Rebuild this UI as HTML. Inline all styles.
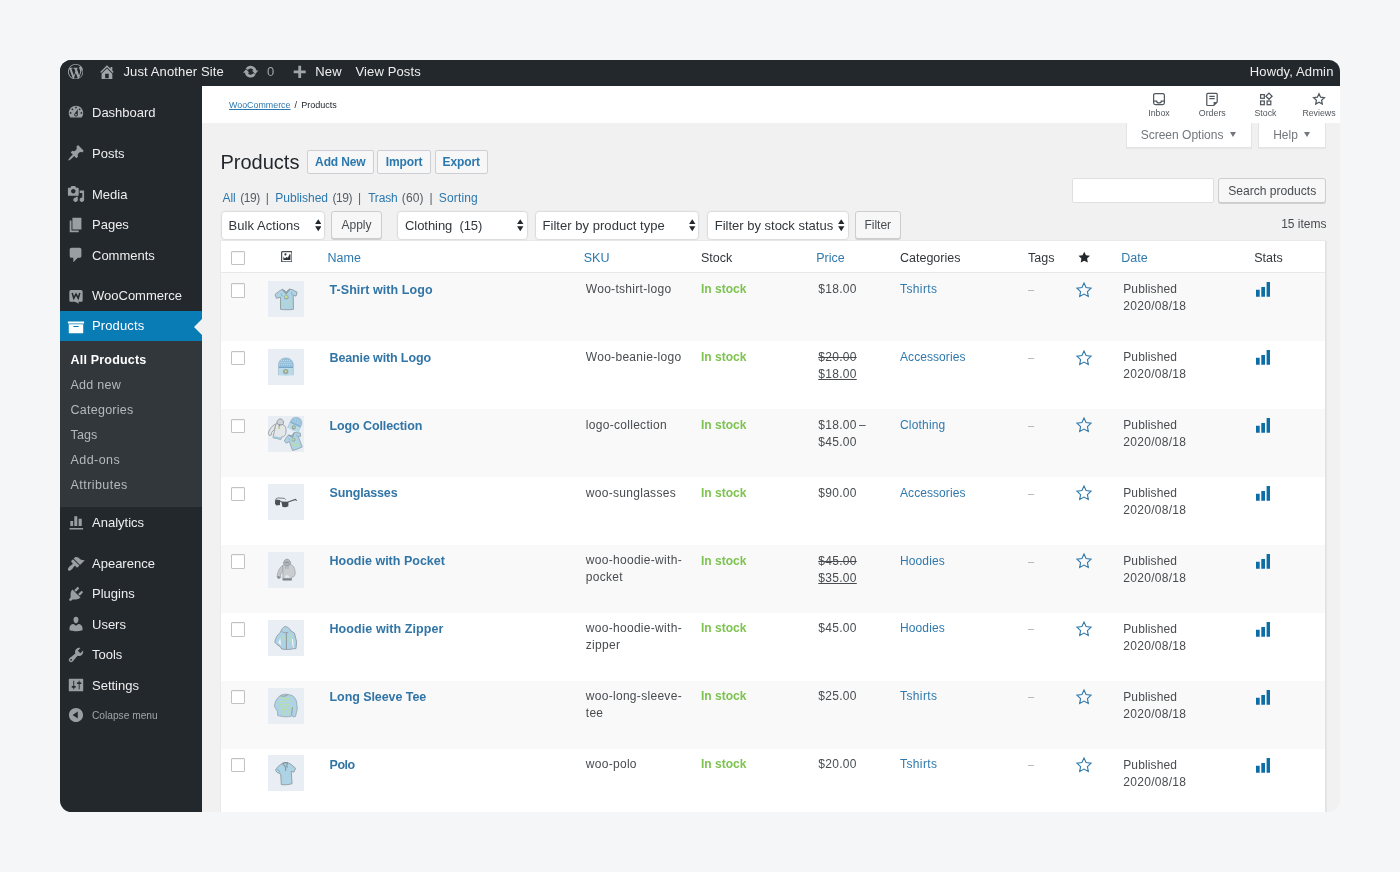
<!DOCTYPE html>
<html lang="en">
<head>
<meta charset="utf-8">
<title>Products ‹ Just Another Site — WordPress</title>
<style>
*{box-sizing:border-box;margin:0;padding:0}
html,body{width:1400px;height:872px;overflow:hidden}
body{background:#f5f6f8;font-family:"Liberation Sans",sans-serif;font-size:12.5px;color:#32373c;position:relative}
a{color:#2f79ad;text-decoration:none}
ul{list-style:none}
svg{display:block}
#frame{will-change:transform;position:absolute;left:60px;top:60px;width:1280px;height:752.400px;border-radius:11.500px;overflow:hidden;background:#f1f1f1}
#adminbar{position:absolute;left:0;top:0;width:1280px;height:26.400px;background:#23282d;color:#eee;z-index:5}
#adminbar .ab{position:absolute;height:26px;display:flex;align-items:center}
#adminbar .abt{position:absolute;top:0;height:26px;line-height:24px;font-size:13px;white-space:nowrap;letter-spacing:.13px}
.ab.wp{left:8px;top:-1.300px}.ab.home{left:38.300px;top:-1.400px}.abt.site{left:63.400px;letter-spacing:.2px}.ab.upd{left:183.400px;top:-1px}.abt.cnt{left:207px;color:#a0a5aa}
.ab.plus{left:230.200px}.abt.new{left:255.300px;letter-spacing:-.25px}.abt.vp{left:295.500px;letter-spacing:-.15px}.abt.howdy{right:6.500px}
#sidebar{position:absolute;left:0;top:0;width:142.400px;height:752px;background:#23282d}
#menu .mi{position:absolute;left:0;width:142px;height:30px;color:#eee;font-size:13px;line-height:30px;white-space:nowrap}
#menu .mi .ic{position:absolute;left:6.7px;top:6px;width:18px;height:18px;display:flex;align-items:center;justify-content:center;opacity:.95}
#menu .mi .lb{position:absolute;left:32px;top:.8px;letter-spacing:0}
#menu .mi.active{background:#0a7cb5;color:#fff}
#menu .mi.active .lb{top:-.4px;letter-spacing:.12px}
#menu .mi.active .ic{top:6.6px;opacity:1}
#menu .mi.collapse{font-size:10.2px;color:#a0a5aa}
#submenu{position:absolute;left:0;top:281px;width:142px;height:166px;background:#32373c}
#submenu li{position:absolute;left:10.5px;height:20px;line-height:20px;font-size:12.5px;color:#b4b9be;white-space:nowrap;letter-spacing:.2px}
#submenu li.cur{color:#fff;font-weight:700;letter-spacing:.25px}
#sidebar .arrow{position:absolute;right:0;top:258.8px;width:0;height:0;border:8px solid transparent;border-right-color:#f1f1f1}
#wooheader{position:absolute;left:142px;top:26px;width:1138px;height:36.800px;background:#fff}
.crumbs{position:absolute;left:27px;top:1.3px;height:37px;line-height:37px;font-size:9px;color:#23282d;white-space:nowrap;word-spacing:1.6px}
.crumbs a{text-decoration:underline;font-size:8.9px;color:#2b78ae}
.act{position:absolute;top:0;width:53px;height:37px;color:#50575d}
.act .ai{position:absolute;left:0;right:0;top:5.800px;display:flex;justify-content:center}
.act .al{position:absolute;left:-5px;right:-5px;top:21.8px;text-align:center;font-size:8.8px;line-height:10px;white-space:nowrap}
#content{position:absolute;left:142px;top:63px;width:1138px;height:689px}
#content>*{position:absolute}
/* coordinates inside #content are relative to frame via negative offsets: use helper */
#content{left:0;top:0;width:1280px;height:752px;pointer-events:none}
.tab{top:63px;height:24.6px;background:#fff;border:1px solid #e2e4e7;border-top:none;color:#72777c;font-size:12px;line-height:24px;white-space:nowrap;box-shadow:0 1px 1px rgba(0,0,0,.04)}
.tab span{position:absolute;top:0}
.tab i{position:absolute;top:9.2px;width:0;height:0;border:3.4px solid transparent;border-top:5.6px solid #72777c;border-bottom:none}
.tab.so{left:1066px;width:126px}.tab.so span{left:13.700px}.tab.so i{left:103px}
.tab.help{left:1198px;width:68px}.tab.help span{left:14.200px}.tab.help i{left:44.500px}
h1{left:160.5px;top:88px;font-size:20px;font-weight:400;line-height:28px;color:#23282d;letter-spacing:0}
.pta{top:90.3px;height:23.6px;border:1px solid #ccd0d4;border-radius:2px;background:#f7f7f7;font-size:12px;font-weight:700;line-height:23.600px;text-align:center;white-space:nowrap;letter-spacing:-.12px;color:#2b78ae}
.views{left:0;top:128.6px;height:18px;line-height:18px;font-size:12px;color:#555d66;white-space:nowrap}
.views li{position:absolute;top:0}
.views .n{margin-left:1.070px;letter-spacing:-.4px}
.views .sep{margin-left:2.470px}
.views a{color:#2b78ae}
.search{left:0;top:0}
.search .inp{position:absolute;left:1012.100px;top:117.900px;width:141.500px;height:25.100px;background:#fff;border:1px solid #dfdfdf;border-radius:2px}
.btn{position:absolute;height:24px;border:1px solid #cdcdcd;border-radius:3px;background:#f7f7f7;box-shadow:0 1px 0 #d0d0d0;color:#484c50;font-size:12px;line-height:22px;text-align:center;white-space:nowrap}
.sbtn{left:1157.900px;top:117.900px;width:108.600px;height:25.200px;line-height:25.800px;font-size:12.100px}
.filters{left:0;top:0}
.filters .btn{top:151.3px;height:28.2px;line-height:26.6px}
.sel{position:absolute;top:151.200px;height:28.700px;border:1px solid #ddd;border-radius:4px;box-shadow:0 0 0 .5px rgba(0,0,0,.03);background:#fff;color:#32373c;font-size:13px;line-height:28.200px;padding-left:6.600px;letter-spacing:.04px;white-space:nowrap}
.sel svg{position:absolute;right:2.700px;top:7.200px}
.count{right:13.500px;top:154.400px;font-size:12px;line-height:20px;color:#484c50;white-space:nowrap}
table.list{left:161px;top:181.400px;width:1104.300px;border-collapse:separate;border-spacing:0;table-layout:fixed;background:#fff;border:0;box-shadow:1.700px 0 0 0 #dfe3e6,0 0 0 1px rgba(0,0,0,.03)}
table.list th{height:31.600px;font-weight:400;text-align:left;font-size:12.500px;color:#32373c;border-bottom:1px solid #e9e9e9;vertical-align:top;padding:9.400px 0 0 0;line-height:15px;white-space:nowrap}
table.list td{height:68px;vertical-align:top;padding:calc(8.350px - var(--d)) 0 0 2px;font-size:12px;line-height:17px;color:#484c50;letter-spacing:.3px;white-space:nowrap}
table.list tr.alt td{background:#f9f9f9}
.c-cb{width:47px}.c-thumb{width:59.5px}.c-name{width:256.25px}.c-sku{width:117.25px}.c-stock{width:115.25px}.c-price{width:83.75px}.c-cat{width:128px}.c-tags{width:44px}.c-star{width:49.25px}.c-date{width:133px}.c-stats{width:71.050px}
table.list td.c-cb{padding:calc(10.200px - var(--d)) 0 0 10.200px}
table.list th.c-cb{padding:9.700px 0 0 10.200px}
table.list td.c-thumb{padding:calc(7.800px - var(--d)) 0 0 .1px}
table.list th.c-thumb{padding:9.500px 0 0 12.600px}
table.list td.c-stock,table.list td.c-cat,table.list td.c-tags{padding-left:0}
table.list td.c-star{padding:calc(7.600px - var(--e)) 0 0 3px}
table.list th.c-star{padding:9.700px 0 0 6.300px}
table.list td.c-stats{padding:calc(9.400px - var(--e)) 0 0 1.700px}
.cb{display:block;width:13.900px;height:14.400px;border:1px solid #c2c2c2;border-radius:1px;background:#fff;box-shadow:inset 0 1px 1px rgba(0,0,0,.05)}
.thumb{display:block;width:36.200px;height:36px;background:#e9eef5;overflow:hidden}
.thumb svg{width:36.200px;height:36px}
.rt{font-weight:700;font-size:12.500px;letter-spacing:0;color:#3175a6}
.instock{background:none;color:#7dc350;font-weight:700;letter-spacing:0}
del{text-decoration:line-through}
ins{text-decoration:underline}

table.list td.c-tags{color:#a3a6a9;font-size:11px}
table.list td.c-price{word-spacing:-1.300px}
table.list td.c-date{letter-spacing:.12px}
table.list td.c-date .d{letter-spacing:.3px}
table.list td.c-name{padding-top:calc(9px - var(--d))}
table.list td.c-sku{padding-top:calc(8.250px - var(--d))}
table.list td.c-stock{padding-top:calc(8.450px - var(--d))}
table.list td.c-tags{padding-top:calc(8.400px - var(--d))}
table.list td.c-date{padding-top:calc(8.100px - var(--e))}

</style>
</head>
<body>
<div id="frame">
<div id="adminbar">
<span class="ab wp"><svg width="15.4" height="15.4" viewBox="0 0 20 20" aria-hidden="true"><path fill="#a0a5aa" d="M20 10c0-5.51-4.49-10-10-10C4.48 0 0 4.49 0 10c0 5.52 4.48 10 10 10 5.51 0 10-4.48 10-10zM7.78 15.37L4.37 6.22c.55-.02 1.17-.08 1.17-.08.5-.06.44-1.13-.06-1.11 0 0-1.45.11-2.37.11-.18 0-.37 0-.58-.01C4.12 2.69 6.87 1.11 10 1.11c2.33 0 4.45.87 6.05 2.34-.68-.11-1.65.39-1.65 1.58 0 .74.45 1.36.9 2.1.35.61.55 1.36.55 2.46 0 1.49-1.4 5-1.4 5l-3.03-8.37c.54-.02.82-.17.82-.17.5-.05.44-1.25-.06-1.22 0 0-1.44.12-2.38.12-.87 0-2.33-.12-2.33-.12-.5-.03-.56 1.2-.06 1.22l.92.08 1.26 3.41zM17.41 10c.24-.64.74-1.87.43-4.25.7 1.29 1.05 2.71 1.05 4.25 0 3.29-1.73 6.24-4.4 7.78.97-2.59 1.94-5.2 2.92-7.78zM6.1 18.09C3.12 16.65 1.11 13.53 1.11 10c0-1.3.23-2.48.72-3.59C3.25 10.3 4.67 14.2 6.1 18.09zm4.03-6.63l2.58 6.98c-.86.29-1.76.45-2.71.45-.79 0-1.57-.11-2.29-.33.81-2.38 1.62-4.74 2.42-7.1z"/></svg></span>
<span class="ab home"><svg width="17.9" height="17.9" viewBox="0 0 20 20" aria-hidden="true"><path fill="#a0a5aa" d="M16 8.5l1.53 1.53-1.06 1.06L10 4.62l-6.47 6.47-1.06-1.06L10 2.5l4 4v-2h2v4zm-6-2.46l6 5.99V18H4v-5.970zM12 17v-5H8v5h4z"/></svg></span>
<span class="abt site">Just Another Site</span>
<span class="ab upd"><svg width="15.3" height="15.3" viewBox="0 0 16 16" aria-hidden="true"><g fill="none" stroke="#a0a5aa" stroke-width="2.900"><path d="M4.01 5.51A4.7 4.7 0 0 1 12.65 7.35"/><path d="M11.99 10.49A4.7 4.7 0 0 1 3.35 8.65"/></g><path fill="#a0a5aa" d="M9.40 6.900h6.600l-3.300 3.700zM0.00 9.100h6.600l-3.300-3.700z"/></svg></span>
<span class="abt cnt">0</span>
<span class="ab plus"><svg width="18.5" height="18.5" viewBox="0 0 20 20" aria-hidden="true"><path fill="#a0a5aa" d="M17 7v3h-5v5H9v-5H4V7h5V2h3v5h5z"/></svg></span>
<span class="abt new">New</span>
<span class="abt vp">View Posts</span>
<span class="abt howdy">Howdy, Admin</span>
</div>
<nav id="sidebar">
<ul id="menu">
<li class="mi " style="top:37px"><span class="ic"><svg width="18" height="18" viewBox="0 0 20 20" aria-hidden="true"><path fill="#a0a5aa" d="M3.76 16h12.48c1.1-1.37 1.76-3.11 1.76-5 0-4.42-3.58-8-8-8s-8 3.58-8 8c0 1.89.66 3.63 1.76 5zM10 4c.55 0 1 .45 1 1s-.45 1-1 1-1-.45-1-1 .45-1 1-1zM6 6c.55 0 1 .45 1 1s-.45 1-1 1-1-.45-1-1 .45-1 1-1zm8 0c.55 0 1 .45 1 1s-.45 1-1 1-1-.45-1-1 .45-1 1-1zm-5.37 5.55L12 7v6c0 1.1-.9 2-2 2s-2-.9-2-2c0-.57.24-1.08.63-1.45zM4 10c.55 0 1 .45 1 1s-.45 1-1 1-1-.45-1-1 .45-1 1-1zm12 0c.55 0 1 .45 1 1s-.45 1-1 1-1-.45-1-1 .45-1 1-1zm-5 3c0-.55-.45-1-1-1s-1 .45-1 1 .45 1 1 1 1-.45 1-1z"/></svg></span><span class="lb">Dashboard</span></li>
<li class="mi " style="top:78px"><span class="ic"><svg width="18" height="18" viewBox="0 0 20 20" aria-hidden="true"><path fill="#a0a5aa" d="M10.44 3.02l1.82-1.82 6.36 6.35-1.83 1.82c-1.05-.68-2.48-.57-3.41.36l-.75.75c-.92.93-1.04 2.35-.35 3.41l-1.83 1.82-2.41-2.41-2.8 2.79c-.42.42-3.38 2.71-3.8 2.29s1.86-3.39 2.28-3.81l2.79-2.79L4.1 9.36l1.83-1.82c1.05.69 2.48.57 3.4-.36l.75-.75c.93-.92 1.05-2.35.36-3.41z"/></svg></span><span class="lb">Posts</span></li>
<li class="mi " style="top:119px"><span class="ic"><svg width="18" height="18" viewBox="0 0 20 20" aria-hidden="true"><path fill="#a0a5aa" d="M13 11V4c0-.55-.45-1-1-1h-1.67L9 1H5L3.67 3H2c-.55 0-1 .45-1 1v7c0 .55.45 1 1 1h10c.55 0 1-.45 1-1zM7 4.5c1.38 0 2.5 1.12 2.5 2.5S8.38 9.5 7 9.5 4.5 8.38 4.5 7 5.62 4.5 7 4.5zM14 6h5v10.5c0 1.38-1.12 2.5-2.5 2.5S14 17.88 14 16.5s1.12-2.5 2.5-2.5c.17 0 .34.02.5.05V9h-3V6zm-4 8.05V13h2v3.5c0 1.38-1.12 2.5-2.5 2.5S7 17.88 7 16.5 8.12 14 9.5 14c.17 0 .34.02.5.05z"/></svg></span><span class="lb">Media</span></li>
<li class="mi " style="top:149.5px"><span class="ic"><svg width="18" height="18" viewBox="0 0 20 20" aria-hidden="true"><path fill="#a0a5aa" d="M6 15V2h10v13H6zm-1 1h8v2H3V5h2v11z"/></svg></span><span class="lb">Pages</span></li>
<li class="mi " style="top:180px"><span class="ic"><svg width="18" height="18" viewBox="0 0 20 20" aria-hidden="true"><path fill="#a0a5aa" d="M5 2h9c1.1 0 2 .9 2 2v7c0 1.1-.9 2-2 2h-2l-5 5v-5H5c-1.1 0-2-.9-2-2V4c0-1.1.9-2 2-2z"/></svg></span><span class="lb">Comments</span></li>
<li class="mi " style="top:220.5px"><span class="ic"><svg width="18" height="18" viewBox="0 0 20 20" aria-hidden="true"><path fill="#a0a5aa" d="M4.4 3.4h11.2c1 0 1.8.8 1.8 1.800v9.400c0 1-.8 1.800-1.800 1.800H12.600l.900 2.200-4.800-2.200H4.400c-1 0-1.800-.8-1.800-1.800V5.200c0-1 .8-1.800 1.800-1.800z"/><polyline fill="none" stroke="#23282d" stroke-width="1.700" stroke-linejoin="miter" points="5.800,6.600 7.500,12.400 10,7.800 12.500,12.400 14.200,6.600"/></svg></span><span class="lb">WooCommerce</span></li>
<li class="mi active" style="top:251px"><span class="ic"><svg width="18" height="18" viewBox="0 0 20 20" aria-hidden="true"><path fill="#fff" d="M19 4v2H1V4h18zM2 7h16v10H2V7zm11 3V9H7v1h6z"/></svg></span><span class="lb">Products</span></li>
<li class="mi " style="top:447.5px"><span class="ic"><svg width="18" height="18" viewBox="0 0 20 20" aria-hidden="true"><path fill="#a0a5aa" d="M3.700 7.800h3.100v5.500H3.700zM8.100 2.600h3.300v10.700H8.100zM12.900 5.200h3.500v8.100h-3.500zM2.800 15.600h15.100v1.600H2.800z"/></svg></span><span class="lb">Analytics</span></li>
<li class="mi " style="top:488.5px"><span class="ic"><svg width="18" height="18" viewBox="0 0 20 20" aria-hidden="true"><path fill="#a0a5aa" d="M14.48 11.06L7.41 3.99l1.5-1.5c.5-.56 2.3-.47 3.51.32 1.21.8 1.43 1.28 2.91 2.1 1.18.64 2.45 1.26 4.45.85zm-.71.71L6.7 4.7 4.93 6.47c-.39.39-.39 1.02 0 1.41l1.06 1.06c.39.39.39 1.03 0 1.42-.6.6-1.43 1.11-2.21 1.69-.35.26-.7.53-1.01.84C1.43 14.23.4 16.08 1.4 17.07c.99 1 2.84-.03 4.18-1.36.31-.31.58-.66.85-1.02.57-.78 1.08-1.61 1.69-2.21.39-.39 1.02-.39 1.41 0l1.06 1.06c.39.39 1.02.39 1.41 0z"/></svg></span><span class="lb">Apearence</span></li>
<li class="mi " style="top:518.5px"><span class="ic"><svg width="18" height="18" viewBox="0 0 20 20" aria-hidden="true"><path fill="#a0a5aa" d="M13.11 4.36L9.87 7.6 8 5.73l3.24-3.24c.35-.34 1.05-.2 1.56.32.52.51.66 1.21.31 1.55zm-8 1.77l.91-1.12 9.01 9.01-1.19.84c-.71.71-2.63 1.16-3.82 1.16H6.140L4.9 17.26c-.59.59-1.54.59-2.12 0-.59-.58-.59-1.53 0-2.120L4 13.900V10.200c0-1.190.410-3.360 1.110-4.070zm7.260 3.970l3.240-3.240c.340-.350 1.040-.210 1.550.310.520.510.660 1.210.310 1.550l-3.240 3.250z"/></svg></span><span class="lb">Plugins</span></li>
<li class="mi " style="top:549px"><span class="ic"><svg width="18" height="18" viewBox="0 0 20 20" aria-hidden="true"><path fill="#a0a5aa" d="M10 9.25c-2.27 0-2.73-3.44-2.73-3.44C7 4.020 7.820 2 9.970 2c2.160 0 2.980 2.020 2.710 3.810 0 0-.410 3.440-2.680 3.440zm0 2.570L12.720 10c2.390 0 4.520 2.330 4.520 4.530v2.490s-3.650 1.130-7.240 1.130c-3.650 0-7.240-1.130-7.240-1.130v-2.490c0-2.250 1.940-4.480 4.470-4.480z"/></svg></span><span class="lb">Users</span></li>
<li class="mi " style="top:579.5px"><span class="ic"><svg width="18" height="18" viewBox="0 0 20 20" aria-hidden="true"><path fill="#a0a5aa" d="M16.68 9.77c-1.34 1.34-3.3 1.67-4.95.99l-5.410 6.520c-.990.990-2.590.990-3.580 0s-.990-2.590 0-3.570l6.520-5.420c-.680-1.650-.350-3.610.990-4.950 1.280-1.280 3.120-1.620 4.720-1.060l-2.890 2.890 2.820 2.820 2.860-2.870c.530 1.580.180 3.390-1.080 4.650zM3.810 16.210c.400.390 1.040.390 1.430 0 .400-.400.400-1.040 0-1.430-.390-.400-1.030-.400-1.430 0-.390.390-.390 1.030 0 1.430z"/></svg></span><span class="lb">Tools</span></li>
<li class="mi " style="top:610px"><span class="ic"><svg width="18" height="18" viewBox="0 0 20 20" aria-hidden="true"><path fill="#a0a5aa" d="M18 16V4c0-.55-.45-1-1-1H3c-.55 0-1 .45-1 1v12c0 .55.45 1 1 1h14c.55 0 1-.45 1-1zM8 11h1c.55 0 1 .45 1 1s-.45 1-1 1H8v1.500c0 .280-.220.500-.500.500s-.500-.220-.500-.500V13H6c-.550 0-1-.450-1-1s.450-1 1-1h1V5.500c0-.280.220-.500.500-.500s.500.220.500.500V11zm5-2h-1c-.550 0-1-.450-1-1s.450-1 1-1h1V5.500c0-.280.220-.500.500-.500s.500.220.500.500V7h1c.550 0 1 .450 1 1s-.450 1-1 1h-1v5.500c0 .280-.220.500-.500.500s-.500-.220-.500-.500V9z"/></svg></span><span class="lb">Settings</span></li>
<li class="mi collapse" style="top:640px"><span class="ic"><svg width="18" height="18" viewBox="0 0 20 20" aria-hidden="true"><path fill="#a0a5aa" d="M10 2.16c4.33 0 7.84 3.51 7.84 7.84s-3.51 7.84-7.84 7.84S2.16 14.33 2.16 10 5.67 2.16 10 2.16zm2 11.720V6.120L6.180 9.970z"/></svg></span><span class="lb">Colapse menu</span></li>
</ul>
<ul id="submenu"><li class="cur" style="top:9px;letter-spacing:0.2px">All Products</li><li class="" style="top:34px;letter-spacing:0.26px">Add new</li><li class="" style="top:59px;letter-spacing:0.26px">Categories</li><li class="" style="top:84px;letter-spacing:0.15px">Tags</li><li class="" style="top:109px;letter-spacing:0.45px">Add-ons</li><li class="" style="top:134px;letter-spacing:0.45px">Attributes</li></ul>
<span class="arrow"></span>
</nav>
<header id="wooheader">
<div class="crumbs"><a>WooCommerce</a> / Products</div>
<div class="act" style="left:930.5px"><span class="ai"><svg width="14" height="14" viewBox="0 0 14 14" aria-hidden="true"><g fill="none" stroke="#50575d" stroke-width="1.25"><rect x="1.600" y="1.500" width="10.800" height="11" rx="1.800"/><path d="M1.600 9.200H4.700c0 1 1 1.700 2.300 1.700s2.300-.700 2.300-1.700h3.100"/></g></svg></span><span class="al">Inbox</span></div>
<div class="act" style="left:983.8px"><span class="ai"><svg width="14" height="14" viewBox="0 0 14 14" aria-hidden="true"><g fill="none" stroke="#50575d" stroke-width="1.25"><path d="M2.700 1.400h8.600a.9.9 0 0 1 .9.900v7.600l-3.600 3.700H2.700a.9.9 0 0 1-.9-.9V2.300a.9.9 0 0 1 .9-.9z"/><path d="M4.300 4.300h5.400M4.300 6.500h5.400"/><path fill="#50575d" stroke="none" d="M12.200 9.900H9.300a.7.7 0 0 0-.7.700v3z"/></g></svg></span><span class="al">Orders</span></div>
<div class="act" style="left:1037px"><span class="ai"><svg width="14" height="14" viewBox="0 0 14 14" aria-hidden="true"><g fill="none" stroke="#50575d" stroke-width="1.25"><rect x="1.600" y="2.600" width="3.700" height="3.700"/><rect x="1.600" y="9" width="3.700" height="3.700"/><rect x="8.100" y="9" width="3.700" height="3.700"/><path d="M10 1.100l3.100 3.100-3.100 3.100-3.100-3.100z"/></g></svg></span><span class="al">Stock</span></div>
<div class="act" style="left:1090.5px"><span class="ai"><svg width="14" height="14" viewBox="0 0 14 14" aria-hidden="true"><g fill="none" stroke="#50575d" stroke-width="1.25"><path d="M7 1.700l1.600 3.500 3.800.5-2.800 2.600.7 3.800L7 10.200l-3.300 1.900.7-3.800-2.800-2.600 3.800-.5z" stroke-linejoin="miter"/></g></svg></span><span class="al">Reviews</span></div>
</header>
<main id="content">
<div class="tab so"><span>Screen Options</span><i></i></div>
<div class="tab help"><span>Help</span><i></i></div>
<h1>Products</h1>
<a class="pta" style="left:247.1px;width:66.5px">Add New</a>
<a class="pta" style="left:317.4px;width:53.4px">Import</a>
<a class="pta" style="left:374.6px;width:53.2px">Export</a>
<ul class="views"><li style="left:162.4px"><a>All</a> <span class="n">(19)</span> <span class="sep">|</span></li><li style="left:215.3px"><a>Published</a> <span class="n">(19)</span> <span class="sep">|</span></li><li style="left:308.2px"><a style="letter-spacing:-.2px">Trash</a> <span class="n" style="letter-spacing:.1px">(60)</span> <span class="sep">|</span></li><li style="left:378.8px"><a style="letter-spacing:.15px">Sorting</a></li></ul>
<div class="search"><span class="inp"></span><span class="btn sbtn">Search products</span></div>
<div class="filters">
<span class="sel" style="left:161px;width:104px">Bulk Actions<svg width="6.5" height="12.4" viewBox="0 0 6.5 12.4" aria-hidden="true"><path d="M3.250 .200L6.400 5.100H.100zM3.250 12.200L.100 7.300h6.300z" fill="#23282d"/></svg></span>
<span class="btn" style="left:271.2px;width:50.6px">Apply</span>
<span class="sel" style="left:337.4px;width:130.2px;letter-spacing:-.05px">Clothing&nbsp; (15)<svg width="6.5" height="12.4" viewBox="0 0 6.5 12.4" aria-hidden="true"><path d="M3.250 .200L6.400 5.100H.100zM3.250 12.200L.100 7.300h6.300z" fill="#23282d"/></svg></span>
<span class="sel" style="left:474.9px;width:164.5px">Filter by product type<svg width="6.5" height="12.4" viewBox="0 0 6.5 12.4" aria-hidden="true"><path d="M3.250 .200L6.400 5.100H.100zM3.250 12.200L.100 7.300h6.300z" fill="#23282d"/></svg></span>
<span class="sel" style="left:647.1px;width:141.5px;letter-spacing:0">Filter by stock status<svg width="6.5" height="12.4" viewBox="0 0 6.5 12.4" aria-hidden="true"><path d="M3.250 .200L6.400 5.100H.100zM3.250 12.200L.100 7.300h6.300z" fill="#23282d"/></svg></span>
<span class="btn" style="left:794.9px;width:45.8px">Filter</span>
</div>
<div class="count">15 items</div>
<table class="list">
<thead><tr>
<th class="c-cb"><span class="cb"></span></th>
<th class="c-thumb"><svg width="11.6" height="11.6" viewBox="0 0 12 12" aria-hidden="true"><rect x=".600" y=".600" width="10.800" height="10.800" rx="1.300" fill="none" stroke="#4a4f54" stroke-width="1.350"/><path fill="#2c3136" d="M2.500 9.300V5.600l1.500 2.200 1.700-1.700 1.400 1L9 3.200l.8.300v5.800z"/><circle cx="4.600" cy="3.500" r="1.100" fill="#2c3136"/></svg></th>
<th class="c-name"><a>Name</a></th>
<th class="c-sku"><a>SKU</a></th>
<th class="c-stock">Stock</th>
<th class="c-price"><a>Price</a></th>
<th class="c-cat">Categories</th>
<th class="c-tags">Tags</th>
<th class="c-star"><svg width="12.5" height="12.5" viewBox="0 0 20 20" aria-hidden="true"><path d="M10 1l2.800 5.900 6.400.8-4.700 4.400 1.200 6.400L10 15.400l-5.700 3.100 1.200-6.400L.8 7.700l6.400-.8z" fill="#23282d"/></svg></th>
<th class="c-date"><a>Date</a></th>
<th class="c-stats">Stats</th>
</tr></thead>
<tbody>
<tr class="alt" style="--d:0.00px;--e:0.00px">
<td class="c-cb"><span class="cb"></span></td>
<td class="c-thumb"><span class="thumb"><svg width="36" height="36" viewBox="0 0 36 36" aria-hidden="true"><rect width="36" height="36" fill="#e9eef5"/><path d="M14.300 8.400l3.800 2.400 3.500-2.700 3 .700 4.500 2.500-1.200 3.800-2.700-.900.100 14.100c-4.200.600-8.600.600-12.900 0V16.200l-4 1.100-1.500-3.700c2.300-2.300 4.800-4 7.400-5.200z" fill="#aed3e4" stroke="#8f9aa2" stroke-width=".9" stroke-linejoin="round"/><path d="M14.300 8.400l3.800 4.500 3.500-4.800" fill="none" stroke="#8a949c" stroke-width="1.100"/><circle cx="18.300" cy="16.200" r="2.300" fill="#9aa4ab"/><circle cx="18.200" cy="15.900" r="1.400" fill="#bfe87a"/><path d="M14.500 20.500h9M14.500 22.800h9M14.500 25.100h9" stroke="#bfe87a" stroke-width="1" stroke-dasharray="1 1.300" fill="none"/><path d="M13 12.500l1.300 3M23.500 11l.5 3.500" stroke="#7fb0d6" stroke-width=".9" fill="none"/></svg></span></td>
<td class="c-name"><a class="rt" style="letter-spacing:0.06px">T-Shirt with Logo</a></td>
<td class="c-sku">Woo-tshirt-logo</td>
<td class="c-stock"><mark class="instock">In stock</mark></td>
<td class="c-price">$18.00</td>
<td class="c-cat"><a style="letter-spacing:0.39px">Tshirts</a></td>
<td class="c-tags">–</td>
<td class="c-star"><svg width="18" height="18" viewBox="0 0 20 20" aria-hidden="true"><path d="M10 2.300l2.300 5 5.500.700-4 3.800 1 5.400L10 14.500l-4.800 2.700 1-5.400-4-3.800 5.500-.700z" fill="none" stroke="#3079ad" stroke-width="1.250" stroke-linejoin="miter"/></svg></td>
<td class="c-date">Published<br><span class="d">2020/08/18</span></td>
<td class="c-stats"><svg width="14.3" height="14.8" viewBox="0 0 14.3 14.8" aria-hidden="true"><path fill="#0d6ea6" d="M0 7.700h3.700v7.100H0zM5.300 5h3.700v9.800H5.300zM10.600 0h3.700v14.800h-3.700z"/></svg></td>
</tr>
<tr class="reg" style="--d:0.20px;--e:0.06px">
<td class="c-cb"><span class="cb"></span></td>
<td class="c-thumb"><span class="thumb"><svg width="36" height="36" viewBox="0 0 36 36" aria-hidden="true"><rect width="36" height="36" fill="#e9eef5"/><path d="M10.400 26.300V15.800c0-4 3.200-6.900 7.400-6.900s7.400 2.900 7.400 6.900v10.500c-4.900.500-9.900.500-14.800 0z" fill="#b9dbe8"/><path d="M10.400 18.300v-2.500c0-4 3.200-6.900 7.400-6.900s7.400 2.900 7.400 6.900v2.500z" fill="#93bedb"/><path d="M11.500 13.500l12.500 0M11 15.700h13.600M12.800 11.400h10" stroke="#d4e6f0" stroke-width=".9" stroke-dasharray="1 1" fill="none"/><path d="M10.700 18.500h14.200" stroke="#6f9fc6" stroke-width=".9"/><path d="M10.400 26.300V15.800c0-4 3.200-6.900 7.400-6.900s7.400 2.900 7.400 6.900v10.500" fill="none" stroke="#a3b4c0" stroke-width=".6"/><circle cx="17.600" cy="22.600" r="2.700" fill="#9ba3a9"/><rect x="16.600" y="21.400" width="2" height="2" fill="#bfe87a"/></svg></span></td>
<td class="c-name"><a class="rt" style="letter-spacing:-0.13px">Beanie with Logo</a></td>
<td class="c-sku">Woo-beanie-logo</td>
<td class="c-stock"><mark class="instock">In stock</mark></td>
<td class="c-price"><del>$20.00</del><br><ins>$18.00</ins></td>
<td class="c-cat"><a style="letter-spacing:0.07px">Accessories</a></td>
<td class="c-tags">–</td>
<td class="c-star"><svg width="18" height="18" viewBox="0 0 20 20" aria-hidden="true"><path d="M10 2.300l2.300 5 5.500.700-4 3.800 1 5.400L10 14.500l-4.800 2.700 1-5.400-4-3.800 5.500-.700z" fill="none" stroke="#3079ad" stroke-width="1.250" stroke-linejoin="miter"/></svg></td>
<td class="c-date">Published<br><span class="d">2020/08/18</span></td>
<td class="c-stats"><svg width="14.3" height="14.8" viewBox="0 0 14.3 14.8" aria-hidden="true"><path fill="#0d6ea6" d="M0 7.700h3.700v7.100H0zM5.300 5h3.700v9.800H5.300zM10.600 0h3.700v14.800h-3.700z"/></svg></td>
</tr>
<tr class="alt" style="--d:0.40px;--e:0.12px">
<td class="c-cb"><span class="cb"></span></td>
<td class="c-thumb"><span class="thumb"><svg width="36" height="36" viewBox="0 0 36 36" aria-hidden="true"><rect width="36" height="36" fill="#e9eef5"/><g transform="translate(9.900 12.600) rotate(12) scale(.95) translate(-18 -17.700)"><path d="M14.900 13.300l-1.600 1.200c-2.600 2.600-4 6-4.300 10l1.600 2.200 2.300-1.200-.600-2.600 2.400-3.700z" fill="#e2e5e8" stroke="#9aa0a5" stroke-width=".9" stroke-linejoin="round"/><path d="M14.800 13.300l3.900-1.200 4.500.600 2.300 1.800c1.200 2.300 1.700 4.800 1.600 7.600l-1.500 2.700-2.200.700v2.700h-8.600z" fill="#e4e7ea" stroke="#9aa0a5" stroke-width=".9" stroke-linejoin="round"/><path d="M15.400 11.200c.3-2.500 1.700-4 3.500-4s3.300 1.500 3.600 4l-.9 1.700c-1.800.600-3.600.600-5.300 0z" fill="#cfd4d8" stroke="#8e9499" stroke-width=".9" stroke-linejoin="round"/><path d="M18.800 13v4.500" stroke="#8a9096" stroke-width="1.600"/><rect x="18" y="15" width="1.700" height="2.600" fill="#bfe87a"/><path d="M14.700 27.300h8.800" stroke="#9cc7dc" stroke-width="1.800"/></g><g transform="translate(27.500 8) rotate(25) scale(.78) translate(-17.800 -17.600)"><path d="M10.400 26.300V15.800c0-4 3.200-6.900 7.400-6.900s7.400 2.900 7.400 6.900v10.500c-4.900.500-9.900.500-14.800 0z" fill="#b9dbe8"/><path d="M10.400 18.300v-2.500c0-4 3.200-6.900 7.400-6.900s7.400 2.900 7.400 6.900v2.500z" fill="#93bedb"/><path d="M11.500 13.500l12.500 0M11 15.700h13.600M12.800 11.400h10" stroke="#d4e6f0" stroke-width=".9" stroke-dasharray="1 1" fill="none"/><path d="M10.700 18.500h14.200" stroke="#6f9fc6" stroke-width=".9"/><path d="M10.400 26.300V15.800c0-4 3.200-6.900 7.400-6.900s7.400 2.900 7.400 6.900v10.500" fill="none" stroke="#a3b4c0" stroke-width=".6"/><circle cx="17.600" cy="22.600" r="2.700" fill="#9ba3a9"/><rect x="16.600" y="21.400" width="2" height="2" fill="#bfe87a"/></g><g transform="translate(25.800 25.200) rotate(-20) scale(.800) translate(-18 -18)"><path d="M14.300 8.400l3.800 2.400 3.500-2.700 3 .700 4.500 2.500-1.200 3.800-2.700-.900.100 14.100c-4.200.600-8.600.600-12.900 0V16.200l-4 1.100-1.500-3.700c2.300-2.300 4.800-4 7.400-5.200z" fill="#aed3e4" stroke="#8f9aa2" stroke-width=".9" stroke-linejoin="round"/><path d="M14.300 8.400l3.800 4.500 3.500-4.800" fill="none" stroke="#8a949c" stroke-width="1.100"/><circle cx="18.300" cy="16.200" r="2.300" fill="#9aa4ab"/><circle cx="18.200" cy="15.900" r="1.400" fill="#bfe87a"/><path d="M14.500 20.500h9M14.500 22.800h9M14.500 25.100h9" stroke="#bfe87a" stroke-width="1" stroke-dasharray="1 1.300" fill="none"/><path d="M13 12.500l1.300 3M23.500 11l.5 3.500" stroke="#7fb0d6" stroke-width=".9" fill="none"/></g></svg></span></td>
<td class="c-name"><a class="rt" style="letter-spacing:-0.11px">Logo Collection</a></td>
<td class="c-sku">logo-collection</td>
<td class="c-stock"><mark class="instock">In stock</mark></td>
<td class="c-price">$18.00 –<br>$45.00</td>
<td class="c-cat"><a style="letter-spacing:0.18px">Clothing</a></td>
<td class="c-tags">–</td>
<td class="c-star"><svg width="18" height="18" viewBox="0 0 20 20" aria-hidden="true"><path d="M10 2.300l2.300 5 5.500.700-4 3.800 1 5.400L10 14.500l-4.800 2.700 1-5.400-4-3.800 5.500-.700z" fill="none" stroke="#3079ad" stroke-width="1.250" stroke-linejoin="miter"/></svg></td>
<td class="c-date">Published<br><span class="d">2020/08/18</span></td>
<td class="c-stats"><svg width="14.3" height="14.8" viewBox="0 0 14.3 14.8" aria-hidden="true"><path fill="#0d6ea6" d="M0 7.700h3.700v7.100H0zM5.300 5h3.700v9.800H5.300zM10.600 0h3.700v14.800h-3.700z"/></svg></td>
</tr>
<tr class="reg" style="--d:0.60px;--e:0.18px">
<td class="c-cb"><span class="cb"></span></td>
<td class="c-thumb"><span class="thumb"><svg width="36" height="36" viewBox="0 0 36 36" aria-hidden="true"><rect width="36" height="36" fill="#e9eef5"/><g transform="translate(0 .5)"><path d="M7.100 15l4.900.500-.100 4.900-3.700.500-1.300-1.800z" fill="#4b5056"/><path d="M13.200 17.100l7.100.100v4.600l-2.500 1-3.400-.200z" fill="#4b5056"/><path d="M11.800 16.400l1.700 1" stroke="#4b5056" stroke-width="1.100" fill="none"/><path d="M7.600 14.600l2.200-1.200 6.600.500 1.300 1.300" stroke="#6a7076" stroke-width=".9" fill="none"/><path d="M20 17.500l7.300-2.600 1 .900" stroke="#555a60" stroke-width="1.100" fill="none" stroke-linecap="round"/></g></svg></span></td>
<td class="c-name"><a class="rt" style="letter-spacing:-0.15px">Sunglasses</a></td>
<td class="c-sku">woo-sunglasses</td>
<td class="c-stock"><mark class="instock">In stock</mark></td>
<td class="c-price">$90.00</td>
<td class="c-cat"><a style="letter-spacing:0.07px">Accessories</a></td>
<td class="c-tags">–</td>
<td class="c-star"><svg width="18" height="18" viewBox="0 0 20 20" aria-hidden="true"><path d="M10 2.300l2.300 5 5.500.700-4 3.800 1 5.400L10 14.500l-4.800 2.700 1-5.400-4-3.800 5.500-.700z" fill="none" stroke="#3079ad" stroke-width="1.250" stroke-linejoin="miter"/></svg></td>
<td class="c-date">Published<br><span class="d">2020/08/18</span></td>
<td class="c-stats"><svg width="14.3" height="14.8" viewBox="0 0 14.3 14.8" aria-hidden="true"><path fill="#0d6ea6" d="M0 7.700h3.700v7.100H0zM5.300 5h3.700v9.800H5.300zM10.600 0h3.700v14.800h-3.700z"/></svg></td>
</tr>
<tr class="alt" style="--d:0.80px;--e:0.24px">
<td class="c-cb"><span class="cb"></span></td>
<td class="c-thumb"><span class="thumb"><svg width="36" height="36" viewBox="0 0 36 36" aria-hidden="true"><rect width="36" height="36" fill="#e9eef5"/><path d="M14.900 13.300l-1.600 1.200c-2.600 2.600-4 6-4.300 10l1.600 2.200 2.300-1.200-.600-2.600 2.400-3.700z" fill="#c3c7ca" stroke="#9aa0a5" stroke-width=".7" stroke-linejoin="round"/><path d="M14.800 13.300l3.900-1.200 4.500.600 2.300 1.800c1.200 2.300 1.700 4.800 1.600 7.600l-1.500 2.700-2.200.700v2.700h-8.600z" fill="#c9cdd0" stroke="#9aa0a5" stroke-width=".7" stroke-linejoin="round"/><path d="M15.400 11.200c.3-2.500 1.700-4 3.500-4s3.300 1.500 3.600 4l-.9 1.700c-1.800.600-3.600.600-5.300 0z" fill="#b3b8bc" stroke="#8e9499" stroke-width=".8" stroke-linejoin="round"/><path d="M16.700 11c1.400-.900 2.900-.900 4.300 0" stroke="#7e858b" stroke-width=".9" fill="none"/><path d="M17.700 13.300v3.500M19.900 13.300v3.500" stroke="#8a9096" stroke-width=".7"/><path d="M16.300 25.700c1.100-3.500 4.300-3.500 5.400 0z" fill="#e4e7e9"/><rect x="14.700" y="26.300" width="8.800" height="1.900" fill="#7b8288"/><circle cx="10.500" cy="25.200" r="1.200" fill="#80868c"/></svg></span></td>
<td class="c-name"><a class="rt" style="letter-spacing:0.01px">Hoodie with Pocket</a></td>
<td class="c-sku">woo-hoodie-with-<br>pocket</td>
<td class="c-stock"><mark class="instock">In stock</mark></td>
<td class="c-price"><del>$45.00</del><br><ins>$35.00</ins></td>
<td class="c-cat"><a style="letter-spacing:0.12px">Hoodies</a></td>
<td class="c-tags">–</td>
<td class="c-star"><svg width="18" height="18" viewBox="0 0 20 20" aria-hidden="true"><path d="M10 2.300l2.300 5 5.500.700-4 3.800 1 5.400L10 14.500l-4.800 2.700 1-5.400-4-3.800 5.500-.700z" fill="none" stroke="#3079ad" stroke-width="1.250" stroke-linejoin="miter"/></svg></td>
<td class="c-date">Published<br><span class="d">2020/08/18</span></td>
<td class="c-stats"><svg width="14.3" height="14.8" viewBox="0 0 14.3 14.8" aria-hidden="true"><path fill="#0d6ea6" d="M0 7.700h3.700v7.100H0zM5.300 5h3.700v9.800H5.300zM10.600 0h3.700v14.800h-3.700z"/></svg></td>
</tr>
<tr class="reg" style="--d:1.00px;--e:0.30px">
<td class="c-cb"><span class="cb"></span></td>
<td class="c-thumb"><span class="thumb"><svg width="36" height="36" viewBox="0 0 36 36" aria-hidden="true"><rect width="36" height="36" fill="#e9eef5"/><path d="M17.200 6.400c2.700.700 4.600 2.300 5.700 4.700l3.400 2 2.200 8.400-.600 7-2.400.400-.600-3.400-.500 3.500c-3.600.600-7.200.600-10.800 0l-1.700-2.600-2.900-1.700-2.300-2.600c.700-4 2.500-7.400 5.700-9.700.700-3 2.600-5.300 4.800-6z" fill="#aed3e4" stroke="#8f9aa2" stroke-width=".9" stroke-linejoin="round"/><path d="M13.600 11.500c1.900 1.400 4.300 1.700 6.600.8" stroke="#97a3ab" stroke-width="1" fill="none"/><path d="M18.300 12.500v16.500" stroke="#8d979e" stroke-width="1"/><path d="M10.300 22.500l1.900-4.500.8 7.500z" fill="#f3f6f8"/><path d="M24.300 19l.900 9.300" stroke="#f3f6f8" stroke-width="1.200"/><circle cx="14.900" cy="16.600" r=".8" fill="#bfe87a"/><circle cx="16" cy="18.600" r=".8" fill="#bfe87a"/><circle cx="22.800" cy="15.500" r=".8" fill="#bfe87a"/><circle cx="22.900" cy="18.600" r=".8" fill="#bfe87a"/><circle cx="21.900" cy="20.600" r=".8" fill="#bfe87a"/></svg></span></td>
<td class="c-name"><a class="rt" style="letter-spacing:0.08px">Hoodie with Zipper</a></td>
<td class="c-sku">woo-hoodie-with-<br>zipper</td>
<td class="c-stock"><mark class="instock">In stock</mark></td>
<td class="c-price">$45.00</td>
<td class="c-cat"><a style="letter-spacing:0.12px">Hoodies</a></td>
<td class="c-tags">–</td>
<td class="c-star"><svg width="18" height="18" viewBox="0 0 20 20" aria-hidden="true"><path d="M10 2.300l2.300 5 5.500.700-4 3.800 1 5.400L10 14.500l-4.800 2.700 1-5.400-4-3.800 5.500-.700z" fill="none" stroke="#3079ad" stroke-width="1.250" stroke-linejoin="miter"/></svg></td>
<td class="c-date">Published<br><span class="d">2020/08/18</span></td>
<td class="c-stats"><svg width="14.3" height="14.8" viewBox="0 0 14.3 14.8" aria-hidden="true"><path fill="#0d6ea6" d="M0 7.700h3.700v7.100H0zM5.300 5h3.700v9.800H5.300zM10.600 0h3.700v14.800h-3.700z"/></svg></td>
</tr>
<tr class="alt" style="--d:1.20px;--e:0.36px">
<td class="c-cb"><span class="cb"></span></td>
<td class="c-thumb"><span class="thumb"><svg width="36" height="36" viewBox="0 0 36 36" aria-hidden="true"><rect width="36" height="36" fill="#e9eef5"/><path d="M12.300 7.500c2.100-1.200 4.900-1.500 7.100-1.200l4.800 1.300c2.300 1.500 3.700 3.600 4.300 6.400l.700 6.800-1.800 7.700-2.600.400-1.300-2.500.900-7.400-1.200 9.200c-3.900.900-7.900.800-11.700-.200l-1.800-.300-.400-4.300-3-5c.300-4.500 2.300-8.400 6-10.900z" fill="#aed3e4" stroke="#97a3ab" stroke-width=".8" stroke-linejoin="round"/><path d="M12.500 7.600c2.300 1 4.700.900 7-.9" stroke="#97a3ab" stroke-width="1.200" fill="none"/><g fill="#bfe87a"><circle cx="14" cy="9.800" r=".7"/><circle cx="16" cy="10.500" r=".7"/><circle cx="18" cy="11.300" r=".7"/><circle cx="20.300" cy="10.500" r=".7"/><circle cx="13" cy="13.500" r=".7"/><circle cx="15" cy="13.500" r=".7"/><circle cx="17" cy="13.600" r=".7"/><circle cx="19.200" cy="13.600" r=".7"/><circle cx="21.800" cy="13.500" r=".7"/><circle cx="12.200" cy="16.500" r=".7"/><circle cx="15" cy="16.300" r=".7"/><circle cx="17" cy="16.300" r=".7"/><circle cx="19" cy="16.400" r=".7"/><circle cx="21" cy="16.500" r=".7"/><circle cx="13.200" cy="18.500" r=".7"/><circle cx="15" cy="19.300" r=".7"/><circle cx="17" cy="19" r=".7"/><circle cx="19" cy="19" r=".7"/><circle cx="21" cy="18.600" r=".7"/><circle cx="14.200" cy="21.300" r=".7"/><circle cx="16" cy="21.500" r=".7"/><circle cx="19" cy="21.500" r=".7"/><circle cx="22" cy="20.300" r=".7"/><circle cx="15" cy="24.300" r=".7"/><circle cx="17" cy="24.300" r=".7"/><circle cx="21" cy="23.500" r=".7"/><circle cx="17" cy="26.300" r=".7"/><circle cx="20" cy="25.500" r=".7"/><circle cx="27" cy="21.500" r=".7"/></g></svg></span></td>
<td class="c-name"><a class="rt" style="letter-spacing:-0.07px">Long Sleeve Tee</a></td>
<td class="c-sku">woo-long-sleeve-<br>tee</td>
<td class="c-stock"><mark class="instock">In stock</mark></td>
<td class="c-price">$25.00</td>
<td class="c-cat"><a style="letter-spacing:0.39px">Tshirts</a></td>
<td class="c-tags">–</td>
<td class="c-star"><svg width="18" height="18" viewBox="0 0 20 20" aria-hidden="true"><path d="M10 2.300l2.300 5 5.500.700-4 3.800 1 5.400L10 14.500l-4.800 2.700 1-5.400-4-3.800 5.500-.700z" fill="none" stroke="#3079ad" stroke-width="1.250" stroke-linejoin="miter"/></svg></td>
<td class="c-date">Published<br><span class="d">2020/08/18</span></td>
<td class="c-stats"><svg width="14.3" height="14.8" viewBox="0 0 14.3 14.8" aria-hidden="true"><path fill="#0d6ea6" d="M0 7.700h3.700v7.100H0zM5.300 5h3.700v9.800H5.300zM10.600 0h3.700v14.800h-3.700z"/></svg></td>
</tr>
<tr class="reg" style="--d:1.40px;--e:0.42px">
<td class="c-cb"><span class="cb"></span></td>
<td class="c-thumb"><span class="thumb"><svg width="36" height="36" viewBox="0 0 36 36" aria-hidden="true"><rect width="36" height="36" fill="#e9eef5"/><g transform="translate(0 .8)"><path d="M14.300 7.700c1.700-.700 3.500-.900 5.400-.700l2.800 1.300 5 4.200-1.800 3.900-2.600-.800.900 12.300c-3.500 1-7.100 1.300-10.800.900l-.600-10.500-3.600-1.700-1.600-2.100c1.600-3.100 3.900-5.300 6.900-6.800z" fill="#aed3e4" stroke="#8f9aa2" stroke-width=".9" stroke-linejoin="round"/><path d="M14.300 7.700l3.100 3.400.2 4.100M19.700 7l-2 4.100" stroke="#8a949c" stroke-width="1.100" fill="none"/><path d="M14.500 7.500c1.700-.700 3.400-.900 5.200-.600" stroke="#8a949c" stroke-width="1.300" fill="none"/><path d="M17.700 8.800l2.300 1.400-.5 2.800z" fill="#7fb0d6"/><path d="M9.300 13l2.700 3.500" stroke="#7fb0d6" stroke-width="1"/></g></svg></span></td>
<td class="c-name"><a class="rt" style="letter-spacing:-0.45px">Polo</a></td>
<td class="c-sku">woo-polo</td>
<td class="c-stock"><mark class="instock">In stock</mark></td>
<td class="c-price">$20.00</td>
<td class="c-cat"><a style="letter-spacing:0.39px">Tshirts</a></td>
<td class="c-tags">–</td>
<td class="c-star"><svg width="18" height="18" viewBox="0 0 20 20" aria-hidden="true"><path d="M10 2.300l2.300 5 5.500.700-4 3.800 1 5.400L10 14.500l-4.800 2.700 1-5.400-4-3.800 5.500-.700z" fill="none" stroke="#3079ad" stroke-width="1.250" stroke-linejoin="miter"/></svg></td>
<td class="c-date">Published<br><span class="d">2020/08/18</span></td>
<td class="c-stats"><svg width="14.3" height="14.8" viewBox="0 0 14.3 14.8" aria-hidden="true"><path fill="#0d6ea6" d="M0 7.700h3.700v7.100H0zM5.300 5h3.700v9.800H5.300zM10.600 0h3.700v14.800h-3.700z"/></svg></td>
</tr>
</tbody>
</table>
</main>
</div>
</body>
</html>
